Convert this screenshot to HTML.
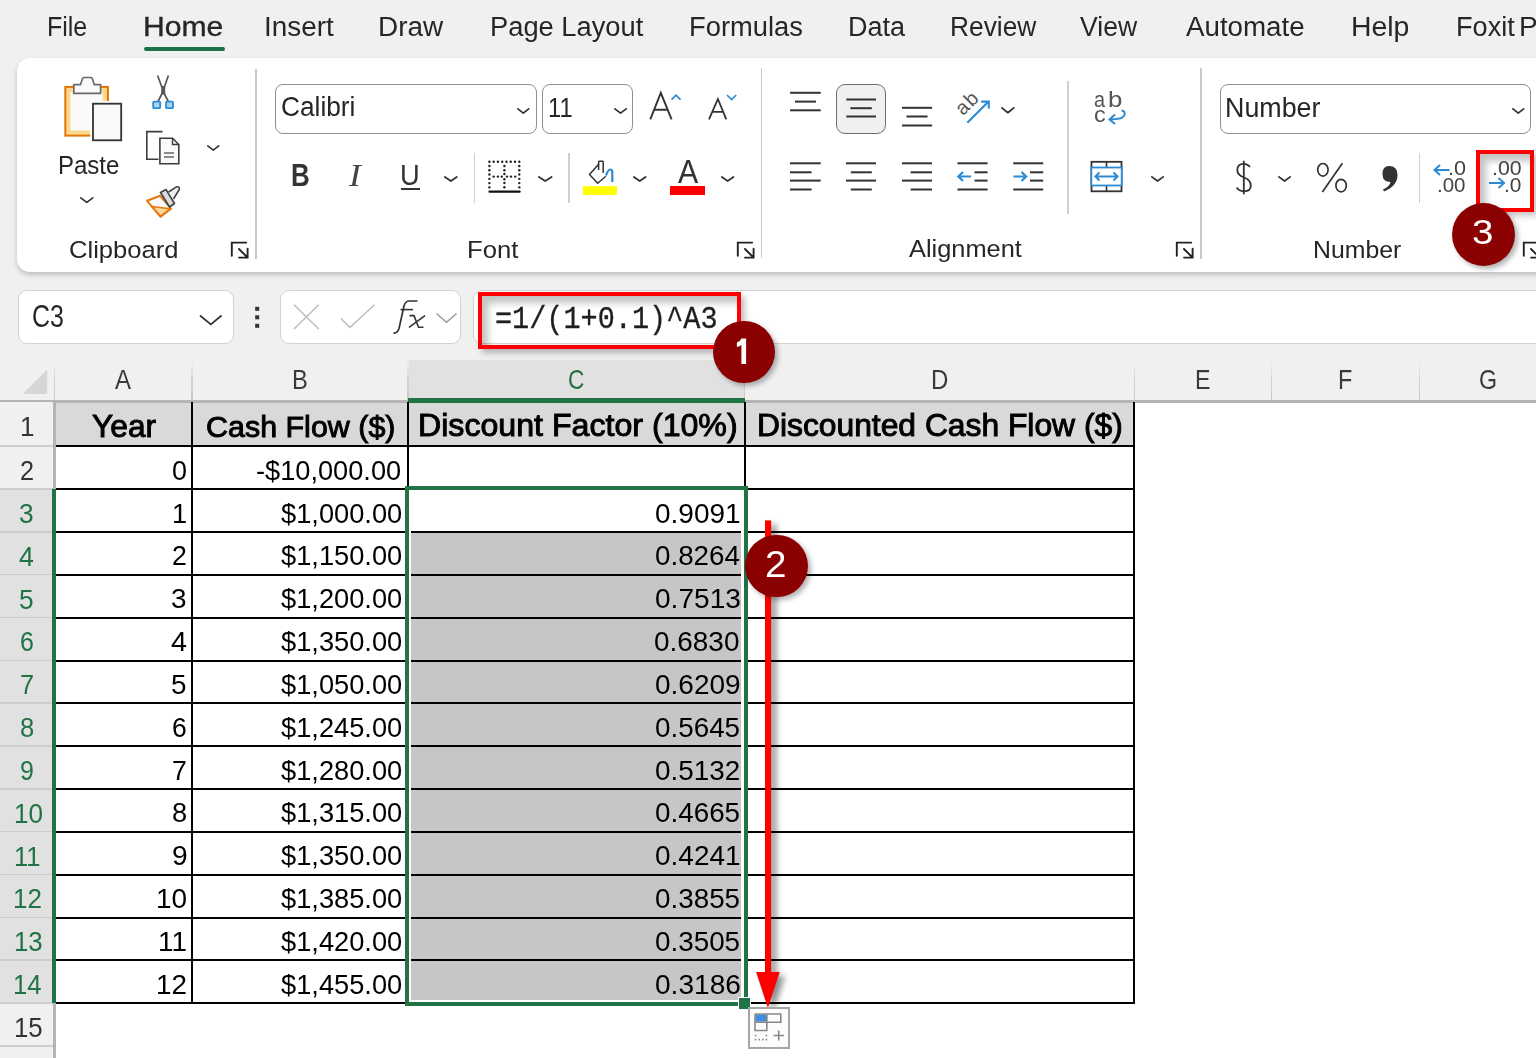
<!DOCTYPE html>
<html><head><meta charset="utf-8"><style>
html,body{margin:0;padding:0;}
body{width:1536px;height:1058px;overflow:hidden;position:relative;background:#f0f0f0;font-family:"Liberation Sans",sans-serif;}
.t{position:absolute;white-space:pre;line-height:1;transform-origin:0 0;}
.a{position:absolute;}
svg.a{overflow:visible;}
</style></head><body>
<div class="a" style="left:0.00px;top:344.00px;width:1536.00px;height:57.50px;background:#f0f0f0"></div>
<div class="a" style="left:408.00px;top:360.00px;width:336.50px;height:41.50px;background:#e1e1e1"></div>
<div class="a" style="left:191.25px;top:362.00px;width:1.50px;height:39.50px;background:linear-gradient(#f0f0f0,#d4d4d4 40%,#c8c8c8)"></div>
<div class="a" style="left:407.25px;top:362.00px;width:1.50px;height:39.50px;background:linear-gradient(#f0f0f0,#d4d4d4 40%,#c8c8c8)"></div>
<div class="a" style="left:743.75px;top:362.00px;width:1.50px;height:39.50px;background:linear-gradient(#f0f0f0,#d4d4d4 40%,#c8c8c8)"></div>
<div class="a" style="left:1133.55px;top:362.00px;width:1.50px;height:39.50px;background:linear-gradient(#f0f0f0,#d4d4d4 40%,#c8c8c8)"></div>
<div class="a" style="left:1270.75px;top:362.00px;width:1.50px;height:39.50px;background:linear-gradient(#f0f0f0,#d4d4d4 40%,#c8c8c8)"></div>
<div class="a" style="left:1418.55px;top:362.00px;width:1.50px;height:39.50px;background:linear-gradient(#f0f0f0,#d4d4d4 40%,#c8c8c8)"></div>
<div class="a" style="left:53.75px;top:362.00px;width:1.50px;height:39.50px;background:linear-gradient(#f0f0f0,#d4d4d4 40%,#c8c8c8)"></div>
<div class="a" style="left:0.00px;top:400.00px;width:1536.00px;height:2.50px;background:#b4b4b4"></div>
<div class="a" style="left:408.00px;top:398.00px;width:336.50px;height:4.50px;background:#217346"></div>
<svg class="a" style="left:20px;top:366px" width="30" height="30" viewBox="20 366 30 30"><path d="M47.2 369.5 V394 H22.8 Z" fill="#d6d6d6"/></svg>
<div class="t" style="left:115.48px;top:365.96px;font-family:'Liberation Sans',sans-serif;font-weight:normal;font-style:normal;font-size:27.54px;color:#3a3a3a;transform:scaleX(0.8719);">A</div>
<div class="t" style="left:291.77px;top:365.96px;font-family:'Liberation Sans',sans-serif;font-weight:normal;font-style:normal;font-size:27.54px;color:#3a3a3a;transform:scaleX(0.8622);">B</div>
<div class="t" style="left:568.08px;top:366.29px;font-family:'Liberation Sans',sans-serif;font-weight:normal;font-style:normal;font-size:27.14px;color:#217346;transform:scaleX(0.8358);">C</div>
<div class="t" style="left:930.51px;top:365.96px;font-family:'Liberation Sans',sans-serif;font-weight:normal;font-style:normal;font-size:27.54px;color:#3a3a3a;transform:scaleX(0.8734);">D</div>
<div class="t" style="left:1194.82px;top:365.96px;font-family:'Liberation Sans',sans-serif;font-weight:normal;font-style:normal;font-size:27.54px;color:#3a3a3a;transform:scaleX(0.8452);">E</div>
<div class="t" style="left:1337.54px;top:365.96px;font-family:'Liberation Sans',sans-serif;font-weight:normal;font-style:normal;font-size:27.54px;color:#3a3a3a;transform:scaleX(0.8510);">F</div>
<div class="t" style="left:1479.14px;top:366.29px;font-family:'Liberation Sans',sans-serif;font-weight:normal;font-style:normal;font-size:27.14px;color:#3a3a3a;transform:scaleX(0.8553);">G</div>
<div class="a" style="left:0.00px;top:401.50px;width:54.50px;height:656.50px;background:#f0f0f0"></div>
<div class="a" style="left:0.00px;top:489.20px;width:54.50px;height:513.96px;background:#e1e1e1"></div>
<div class="a" style="left:0.00px;top:445.00px;width:54.50px;height:1.60px;background:#cdcdcd"></div>
<div class="a" style="left:0.00px;top:488.20px;width:54.50px;height:1.60px;background:#cdcdcd"></div>
<div class="a" style="left:0.00px;top:531.03px;width:54.50px;height:1.60px;background:#cdcdcd"></div>
<div class="a" style="left:0.00px;top:573.86px;width:54.50px;height:1.60px;background:#cdcdcd"></div>
<div class="a" style="left:0.00px;top:616.69px;width:54.50px;height:1.60px;background:#cdcdcd"></div>
<div class="a" style="left:0.00px;top:659.52px;width:54.50px;height:1.60px;background:#cdcdcd"></div>
<div class="a" style="left:0.00px;top:702.35px;width:54.50px;height:1.60px;background:#cdcdcd"></div>
<div class="a" style="left:0.00px;top:745.18px;width:54.50px;height:1.60px;background:#cdcdcd"></div>
<div class="a" style="left:0.00px;top:788.01px;width:54.50px;height:1.60px;background:#cdcdcd"></div>
<div class="a" style="left:0.00px;top:830.84px;width:54.50px;height:1.60px;background:#cdcdcd"></div>
<div class="a" style="left:0.00px;top:873.67px;width:54.50px;height:1.60px;background:#cdcdcd"></div>
<div class="a" style="left:0.00px;top:916.50px;width:54.50px;height:1.60px;background:#cdcdcd"></div>
<div class="a" style="left:0.00px;top:959.33px;width:54.50px;height:1.60px;background:#cdcdcd"></div>
<div class="a" style="left:0.00px;top:1002.16px;width:54.50px;height:1.60px;background:#cdcdcd"></div>
<div class="a" style="left:0.00px;top:1044.99px;width:54.50px;height:1.60px;background:#cdcdcd"></div>
<div class="a" style="left:53.40px;top:401.50px;width:2.20px;height:656.50px;background:#b4b4b4"></div>
<div class="a" style="left:51.50px;top:489.20px;width:4.50px;height:513.96px;background:#217346"></div>
<div class="t" style="left:19.51px;top:413.11px;font-family:'Liberation Sans',sans-serif;font-weight:normal;font-style:normal;font-size:28.00px;color:#333;transform:scaleX(0.9311);">1</div>
<div class="t" style="left:20.08px;top:456.96px;font-family:'Liberation Sans',sans-serif;font-weight:normal;font-style:normal;font-size:28.00px;color:#333;transform:scaleX(0.9020);">2</div>
<div class="t" style="left:19.45px;top:499.97px;font-family:'Liberation Sans',sans-serif;font-weight:normal;font-style:normal;font-size:28.00px;color:#217346;transform:scaleX(0.9384);">3</div>
<div class="t" style="left:19.44px;top:542.80px;font-family:'Liberation Sans',sans-serif;font-weight:normal;font-style:normal;font-size:28.00px;color:#217346;transform:scaleX(0.9560);">4</div>
<div class="t" style="left:19.45px;top:585.63px;font-family:'Liberation Sans',sans-serif;font-weight:normal;font-style:normal;font-size:28.00px;color:#217346;transform:scaleX(0.9384);">5</div>
<div class="t" style="left:19.63px;top:628.46px;font-family:'Liberation Sans',sans-serif;font-weight:normal;font-style:normal;font-size:28.00px;color:#217346;transform:scaleX(0.8918);">6</div>
<div class="t" style="left:20.08px;top:671.29px;font-family:'Liberation Sans',sans-serif;font-weight:normal;font-style:normal;font-size:28.00px;color:#217346;transform:scaleX(0.9020);">7</div>
<div class="t" style="left:19.54px;top:714.12px;font-family:'Liberation Sans',sans-serif;font-weight:normal;font-style:normal;font-size:28.00px;color:#217346;transform:scaleX(0.9149);">8</div>
<div class="t" style="left:19.76px;top:756.95px;font-family:'Liberation Sans',sans-serif;font-weight:normal;font-style:normal;font-size:28.00px;color:#217346;transform:scaleX(0.8918);">9</div>
<div class="t" style="left:13.54px;top:799.78px;font-family:'Liberation Sans',sans-serif;font-weight:normal;font-style:normal;font-size:28.00px;color:#217346;transform:scaleX(0.9334);">10</div>
<div class="t" style="left:14.10px;top:842.61px;font-family:'Liberation Sans',sans-serif;font-weight:normal;font-style:normal;font-size:28.00px;color:#217346;transform:scaleX(0.9140);">11</div>
<div class="t" style="left:13.40px;top:885.44px;font-family:'Liberation Sans',sans-serif;font-weight:normal;font-style:normal;font-size:28.00px;color:#217346;transform:scaleX(0.9290);">12</div>
<div class="t" style="left:13.76px;top:928.27px;font-family:'Liberation Sans',sans-serif;font-weight:normal;font-style:normal;font-size:28.00px;color:#217346;transform:scaleX(0.9223);">13</div>
<div class="t" style="left:13.32px;top:971.10px;font-family:'Liberation Sans',sans-serif;font-weight:normal;font-style:normal;font-size:28.00px;color:#217346;transform:scaleX(0.9167);">14</div>
<div class="t" style="left:13.76px;top:1013.93px;font-family:'Liberation Sans',sans-serif;font-weight:normal;font-style:normal;font-size:28.00px;color:#333;transform:scaleX(0.9223);">15</div>
<div class="a" style="left:55.60px;top:402.50px;width:1480.40px;height:655.50px;background:#fff"></div>
<div class="a" style="left:55.60px;top:402.50px;width:1078.70px;height:43.50px;background:#d9d9d9"></div>
<div class="a" style="left:411.30px;top:532.10px;width:329.70px;height:467.90px;background:#c6c6c6"></div>
<div class="a" style="left:191.00px;top:402.00px;width:2.00px;height:602.16px;background:#000"></div>
<div class="a" style="left:407.00px;top:402.00px;width:2.00px;height:602.16px;background:#000"></div>
<div class="a" style="left:743.50px;top:402.00px;width:2.00px;height:602.16px;background:#000"></div>
<div class="a" style="left:1133.30px;top:402.00px;width:2.00px;height:602.16px;background:#000"></div>
<div class="a" style="left:55.60px;top:445.00px;width:1079.70px;height:2.00px;background:#000"></div>
<div class="a" style="left:55.60px;top:488.20px;width:1079.70px;height:2.00px;background:#000"></div>
<div class="a" style="left:55.60px;top:531.03px;width:1079.70px;height:2.00px;background:#000"></div>
<div class="a" style="left:55.60px;top:573.86px;width:1079.70px;height:2.00px;background:#000"></div>
<div class="a" style="left:55.60px;top:616.69px;width:1079.70px;height:2.00px;background:#000"></div>
<div class="a" style="left:55.60px;top:659.52px;width:1079.70px;height:2.00px;background:#000"></div>
<div class="a" style="left:55.60px;top:702.35px;width:1079.70px;height:2.00px;background:#000"></div>
<div class="a" style="left:55.60px;top:745.18px;width:1079.70px;height:2.00px;background:#000"></div>
<div class="a" style="left:55.60px;top:788.01px;width:1079.70px;height:2.00px;background:#000"></div>
<div class="a" style="left:55.60px;top:830.84px;width:1079.70px;height:2.00px;background:#000"></div>
<div class="a" style="left:55.60px;top:873.67px;width:1079.70px;height:2.00px;background:#000"></div>
<div class="a" style="left:55.60px;top:916.50px;width:1079.70px;height:2.00px;background:#000"></div>
<div class="a" style="left:55.60px;top:959.33px;width:1079.70px;height:2.00px;background:#000"></div>
<div class="a" style="left:55.60px;top:1002.16px;width:1079.70px;height:2.00px;background:#000"></div>
<div class="a" style="left:51.50px;top:489.20px;width:4.50px;height:513.96px;background:#217346"></div>
<div class="a" style="left:405.00px;top:486.20px;width:343.00px;height:4.20px;background:#217346"></div>
<div class="a" style="left:405.00px;top:486.20px;width:4.00px;height:520.10px;background:#217346"></div>
<div class="a" style="left:743.60px;top:486.20px;width:4.20px;height:520.10px;background:#217346"></div>
<div class="a" style="left:405.00px;top:1002.10px;width:342.80px;height:4.20px;background:#217346"></div>
<div class="a" style="left:409.00px;top:490.40px;width:2.30px;height:511.70px;background:#fff"></div>
<div class="a" style="left:741.00px;top:490.40px;width:2.60px;height:511.70px;background:#fff"></div>
<div class="a" style="left:409.00px;top:999.50px;width:334.60px;height:2.60px;background:#fff"></div>
<div class="a" style="left:411.30px;top:531.03px;width:329.70px;height:2.00px;background:#000"></div>
<div class="a" style="left:411.30px;top:573.86px;width:329.70px;height:2.00px;background:#000"></div>
<div class="a" style="left:411.30px;top:616.69px;width:329.70px;height:2.00px;background:#000"></div>
<div class="a" style="left:411.30px;top:659.52px;width:329.70px;height:2.00px;background:#000"></div>
<div class="a" style="left:411.30px;top:702.35px;width:329.70px;height:2.00px;background:#000"></div>
<div class="a" style="left:411.30px;top:745.18px;width:329.70px;height:2.00px;background:#000"></div>
<div class="a" style="left:411.30px;top:788.01px;width:329.70px;height:2.00px;background:#000"></div>
<div class="a" style="left:411.30px;top:830.84px;width:329.70px;height:2.00px;background:#000"></div>
<div class="a" style="left:411.30px;top:873.67px;width:329.70px;height:2.00px;background:#000"></div>
<div class="a" style="left:411.30px;top:916.50px;width:329.70px;height:2.00px;background:#000"></div>
<div class="a" style="left:411.30px;top:959.33px;width:329.70px;height:2.00px;background:#000"></div>
<div class="a" style="left:739.00px;top:998.00px;width:10.60px;height:10.60px;background:#217346;border:1px solid #fff;box-sizing:content-box;margin:-1px 0 0 -1px"></div>
<div class="t" style="left:91.99px;top:411.16px;font-family:'Liberation Sans',sans-serif;font-weight:normal;font-style:normal;font-size:31.16px;color:#000;transform:scaleX(1.0179);-webkit-text-stroke:0.95px #000;">Year</div>
<div class="t" style="left:206.01px;top:411.61px;font-family:'Liberation Sans',sans-serif;font-weight:normal;font-style:normal;font-size:30.29px;color:#000;transform:scaleX(1.0053);-webkit-text-stroke:0.95px #000;">Cash Flow ($)</div>
<div class="t" style="left:417.68px;top:411.23px;font-family:'Liberation Sans',sans-serif;font-weight:normal;font-style:normal;font-size:30.72px;color:#000;transform:scaleX(1.0460);-webkit-text-stroke:0.95px #000;">Discount Factor (10%)</div>
<div class="t" style="left:757.35px;top:411.23px;font-family:'Liberation Sans',sans-serif;font-weight:normal;font-style:normal;font-size:30.72px;color:#000;transform:scaleX(1.0349);-webkit-text-stroke:0.95px #000;">Discounted Cash Flow ($)</div>
<div class="t" style="left:171.64px;top:456.83px;font-family:'Liberation Sans',sans-serif;font-weight:normal;font-style:normal;font-size:27.57px;color:#000;transform:scaleX(0.9774);">0</div>
<div class="t" style="left:255.90px;top:456.83px;font-family:'Liberation Sans',sans-serif;font-weight:normal;font-style:normal;font-size:27.57px;color:#000;transform:scaleX(0.9868);">-$10,000.00</div>
<div class="t" style="left:171.75px;top:499.66px;font-family:'Liberation Sans',sans-serif;font-weight:normal;font-style:normal;font-size:27.57px;color:#000;transform:scaleX(0.9876);">1</div>
<div class="t" style="left:280.55px;top:499.66px;font-family:'Liberation Sans',sans-serif;font-weight:normal;font-style:normal;font-size:27.57px;color:#000;transform:scaleX(0.9887);">$1,000.00</div>
<div class="t" style="left:654.54px;top:499.66px;font-family:'Liberation Sans',sans-serif;font-weight:normal;font-style:normal;font-size:27.57px;color:#000;transform:scaleX(1.0146);">0.9091</div>
<div class="t" style="left:172.14px;top:542.49px;font-family:'Liberation Sans',sans-serif;font-weight:normal;font-style:normal;font-size:27.57px;color:#000;transform:scaleX(0.9676);">2</div>
<div class="t" style="left:280.55px;top:542.49px;font-family:'Liberation Sans',sans-serif;font-weight:normal;font-style:normal;font-size:27.57px;color:#000;transform:scaleX(0.9887);">$1,150.00</div>
<div class="t" style="left:654.71px;top:542.49px;font-family:'Liberation Sans',sans-serif;font-weight:normal;font-style:normal;font-size:27.57px;color:#000;transform:scaleX(1.0074);">0.8264</div>
<div class="t" style="left:171.32px;top:585.32px;font-family:'Liberation Sans',sans-serif;font-weight:normal;font-style:normal;font-size:27.57px;color:#000;transform:scaleX(1.0113);">3</div>
<div class="t" style="left:280.55px;top:585.32px;font-family:'Liberation Sans',sans-serif;font-weight:normal;font-style:normal;font-size:27.57px;color:#000;transform:scaleX(0.9887);">$1,200.00</div>
<div class="t" style="left:654.86px;top:585.32px;font-family:'Liberation Sans',sans-serif;font-weight:normal;font-style:normal;font-size:27.57px;color:#000;transform:scaleX(1.0187);">0.7513</div>
<div class="t" style="left:170.62px;top:628.15px;font-family:'Liberation Sans',sans-serif;font-weight:normal;font-style:normal;font-size:27.57px;color:#000;transform:scaleX(1.0401);">4</div>
<div class="t" style="left:280.55px;top:628.15px;font-family:'Liberation Sans',sans-serif;font-weight:normal;font-style:normal;font-size:27.57px;color:#000;transform:scaleX(0.9887);">$1,350.00</div>
<div class="t" style="left:654.39px;top:628.15px;font-family:'Liberation Sans',sans-serif;font-weight:normal;font-style:normal;font-size:27.57px;color:#000;transform:scaleX(1.0131);">0.6830</div>
<div class="t" style="left:171.32px;top:670.98px;font-family:'Liberation Sans',sans-serif;font-weight:normal;font-style:normal;font-size:27.57px;color:#000;transform:scaleX(1.0113);">5</div>
<div class="t" style="left:280.55px;top:670.98px;font-family:'Liberation Sans',sans-serif;font-weight:normal;font-style:normal;font-size:27.57px;color:#000;transform:scaleX(0.9887);">$1,050.00</div>
<div class="t" style="left:654.54px;top:670.98px;font-family:'Liberation Sans',sans-serif;font-weight:normal;font-style:normal;font-size:27.57px;color:#000;transform:scaleX(1.0146);">0.6209</div>
<div class="t" style="left:171.99px;top:713.81px;font-family:'Liberation Sans',sans-serif;font-weight:normal;font-style:normal;font-size:27.57px;color:#000;transform:scaleX(0.9610);">6</div>
<div class="t" style="left:280.55px;top:713.81px;font-family:'Liberation Sans',sans-serif;font-weight:normal;font-style:normal;font-size:27.57px;color:#000;transform:scaleX(0.9887);">$1,245.00</div>
<div class="t" style="left:654.86px;top:713.81px;font-family:'Liberation Sans',sans-serif;font-weight:normal;font-style:normal;font-size:27.57px;color:#000;transform:scaleX(1.0090);">0.5645</div>
<div class="t" style="left:172.14px;top:756.64px;font-family:'Liberation Sans',sans-serif;font-weight:normal;font-style:normal;font-size:27.57px;color:#000;transform:scaleX(0.9676);">7</div>
<div class="t" style="left:280.55px;top:756.64px;font-family:'Liberation Sans',sans-serif;font-weight:normal;font-style:normal;font-size:27.57px;color:#000;transform:scaleX(0.9887);">$1,280.00</div>
<div class="t" style="left:655.02px;top:756.64px;font-family:'Liberation Sans',sans-serif;font-weight:normal;font-style:normal;font-size:27.57px;color:#000;transform:scaleX(1.0105);">0.5132</div>
<div class="t" style="left:171.66px;top:799.47px;font-family:'Liberation Sans',sans-serif;font-weight:normal;font-style:normal;font-size:27.57px;color:#000;transform:scaleX(0.9859);">8</div>
<div class="t" style="left:280.55px;top:799.47px;font-family:'Liberation Sans',sans-serif;font-weight:normal;font-style:normal;font-size:27.57px;color:#000;transform:scaleX(0.9887);">$1,315.00</div>
<div class="t" style="left:654.86px;top:799.47px;font-family:'Liberation Sans',sans-serif;font-weight:normal;font-style:normal;font-size:27.57px;color:#000;transform:scaleX(1.0090);">0.4665</div>
<div class="t" style="left:172.13px;top:842.30px;font-family:'Liberation Sans',sans-serif;font-weight:normal;font-style:normal;font-size:27.57px;color:#000;transform:scaleX(1.0193);">9</div>
<div class="t" style="left:280.55px;top:842.30px;font-family:'Liberation Sans',sans-serif;font-weight:normal;font-style:normal;font-size:27.57px;color:#000;transform:scaleX(0.9887);">$1,350.00</div>
<div class="t" style="left:654.54px;top:842.30px;font-family:'Liberation Sans',sans-serif;font-weight:normal;font-style:normal;font-size:27.57px;color:#000;transform:scaleX(1.0146);">0.4241</div>
<div class="t" style="left:155.56px;top:885.13px;font-family:'Liberation Sans',sans-serif;font-weight:normal;font-style:normal;font-size:27.57px;color:#000;transform:scaleX(1.0155);">10</div>
<div class="t" style="left:280.55px;top:885.13px;font-family:'Liberation Sans',sans-serif;font-weight:normal;font-style:normal;font-size:27.57px;color:#000;transform:scaleX(0.9887);">$1,385.00</div>
<div class="t" style="left:654.86px;top:885.13px;font-family:'Liberation Sans',sans-serif;font-weight:normal;font-style:normal;font-size:27.57px;color:#000;transform:scaleX(1.0090);">0.3855</div>
<div class="t" style="left:158.05px;top:927.96px;font-family:'Liberation Sans',sans-serif;font-weight:normal;font-style:normal;font-size:27.57px;color:#000;transform:scaleX(1.0116);">11</div>
<div class="t" style="left:280.55px;top:927.96px;font-family:'Liberation Sans',sans-serif;font-weight:normal;font-style:normal;font-size:27.57px;color:#000;transform:scaleX(0.9887);">$1,420.00</div>
<div class="t" style="left:654.86px;top:927.96px;font-family:'Liberation Sans',sans-serif;font-weight:normal;font-style:normal;font-size:27.57px;color:#000;transform:scaleX(1.0090);">0.3505</div>
<div class="t" style="left:156.19px;top:970.79px;font-family:'Liberation Sans',sans-serif;font-weight:normal;font-style:normal;font-size:27.57px;color:#000;transform:scaleX(1.0084);">12</div>
<div class="t" style="left:280.55px;top:970.79px;font-family:'Liberation Sans',sans-serif;font-weight:normal;font-style:normal;font-size:27.57px;color:#000;transform:scaleX(0.9887);">$1,455.00</div>
<div class="t" style="left:654.86px;top:970.79px;font-family:'Liberation Sans',sans-serif;font-weight:normal;font-style:normal;font-size:27.57px;color:#000;transform:scaleX(1.0187);">0.3186</div>
<div class="a" style="left:18.20px;top:289.50px;width:216.20px;height:54.50px;border:1.5px solid #d2d2d2;border-radius:9px;box-sizing:border-box;background:#fff"></div>
<div class="t" style="left:31.97px;top:300.93px;font-family:'Liberation Sans',sans-serif;font-weight:normal;font-style:normal;font-size:31.43px;color:#262626;transform:scaleX(0.7937);">C3</div>
<svg class="a" style="left:196px;top:310px" width="30" height="20" viewBox="196 310 30 20"><path d="M200 315.5 L210.8 324.5 L221.6 315.5" fill="none" stroke="#333" stroke-width="1.7"/></svg>
<svg class="a" style="left:250px;top:300px" width="14" height="32" viewBox="250 300 14 32"><rect x="255.2" y="306.8" width="4" height="4" fill="#333"/><rect x="255.2" y="315.3" width="4" height="4" fill="#333"/><rect x="255.2" y="323.8" width="4" height="4" fill="#333"/></svg>
<div class="a" style="left:279.60px;top:289.60px;width:181.50px;height:54.60px;border:1.5px solid #d2d2d2;border-radius:9px;box-sizing:border-box;background:#fff"></div>
<svg class="a" style="left:290px;top:300px" width="90" height="35" viewBox="290 300 90 35"><path d="M294 304.8 L318.7 329 M318.7 304.8 L294 329" stroke="#bdbdbd" stroke-width="1.5"/><path d="M341 318.5 L350 327.5 L374.5 304.8" fill="none" stroke="#bdbdbd" stroke-width="1.5"/></svg>
<svg class="a" style="left:388px;top:296px" width="42" height="42" viewBox="388 296 42 42"><path d="M393.5 333 Q397.5 333.5 399 328.5 L404 306 Q405.3 301 409.5 301 H417.5" fill="none" stroke="#333" stroke-width="1.7"/><path d="M400.5 309.6 H413" stroke="#333" stroke-width="1.6"/><path d="M409.5 315.6 H414 L418.5 327.3 H423.5 M425 315.6 L409 327.3" fill="none" stroke="#333" stroke-width="1.6"/></svg>
<svg class="a" style="left:432px;top:308px" width="30" height="20" viewBox="432 308 30 20"><path d="M436.5 313.5 L446.5 322.3 L456.5 313.5" fill="none" stroke="#999" stroke-width="1.5"/></svg>
<div class="a" style="left:472.50px;top:290.00px;width:1087.50px;height:54.00px;border:1.5px solid #d2d2d2;border-radius:9px 0 0 9px;box-sizing:border-box;background:#fff"></div>
<div class="a" style="left:477.70px;top:291.50px;width:263.40px;height:57.10px;border:4.4px solid #ff0000;box-sizing:border-box;box-shadow:inset 6px 7px 7px rgba(0,0,0,0.24), 4px 4px 6px rgba(0,0,0,0.25)"></div>
<div class="t" style="left:495.32px;top:304.70px;font-family:'Liberation Mono',monospace;font-weight:normal;font-style:normal;font-size:31.82px;color:#1f1f1f;transform:scaleX(0.8966);-webkit-text-stroke:0.35px #1f1f1f;">=1/(1+0.1)^A3</div>
<div class="t" style="left:46.54px;top:12.68px;font-family:'Liberation Sans',sans-serif;font-weight:normal;font-style:normal;font-size:27.39px;color:#262626;transform:scaleX(0.9124);">File</div>
<div class="t" style="left:143.01px;top:12.68px;font-family:'Liberation Sans',sans-serif;font-weight:normal;font-style:normal;font-size:27.39px;color:#262626;transform:scaleX(1.1001);-webkit-text-stroke:0.35px #262626;">Home</div>
<div class="t" style="left:264.15px;top:12.68px;font-family:'Liberation Sans',sans-serif;font-weight:normal;font-style:normal;font-size:27.39px;color:#262626;transform:scaleX(1.0171);">Insert</div>
<div class="t" style="left:378.44px;top:12.68px;font-family:'Liberation Sans',sans-serif;font-weight:normal;font-style:normal;font-size:27.39px;color:#262626;transform:scaleX(1.0200);">Draw</div>
<div class="t" style="left:489.60px;top:12.68px;font-family:'Liberation Sans',sans-serif;font-weight:normal;font-style:normal;font-size:27.39px;color:#262626;transform:scaleX(0.9969);">Page Layout</div>
<div class="t" style="left:689.15px;top:12.68px;font-family:'Liberation Sans',sans-serif;font-weight:normal;font-style:normal;font-size:27.39px;color:#262626;transform:scaleX(0.9983);">Formulas</div>
<div class="t" style="left:847.82px;top:12.68px;font-family:'Liberation Sans',sans-serif;font-weight:normal;font-style:normal;font-size:27.39px;color:#262626;transform:scaleX(0.9871);">Data</div>
<div class="t" style="left:950.34px;top:12.68px;font-family:'Liberation Sans',sans-serif;font-weight:normal;font-style:normal;font-size:27.39px;color:#262626;transform:scaleX(0.9622);">Review</div>
<div class="t" style="left:1079.87px;top:12.68px;font-family:'Liberation Sans',sans-serif;font-weight:normal;font-style:normal;font-size:27.39px;color:#262626;transform:scaleX(0.9701);">View</div>
<div class="t" style="left:1185.56px;top:12.68px;font-family:'Liberation Sans',sans-serif;font-weight:normal;font-style:normal;font-size:27.39px;color:#262626;transform:scaleX(1.0124);">Automate</div>
<div class="t" style="left:1350.73px;top:12.68px;font-family:'Liberation Sans',sans-serif;font-weight:normal;font-style:normal;font-size:27.39px;color:#262626;transform:scaleX(1.0377);">Help</div>
<div class="t" style="left:1455.82px;top:12.68px;font-family:'Liberation Sans',sans-serif;font-weight:normal;font-style:normal;font-size:27.39px;color:#262626;transform:scaleX(0.9907);">Foxit</div>
<div class="t" style="left:1519.26px;top:12.68px;font-family:'Liberation Sans',sans-serif;font-weight:normal;font-style:normal;font-size:27.39px;color:#262626;transform:scaleX(1.0222);">PDF</div>
<div class="a" style="left:144.00px;top:47.00px;width:81.00px;height:4.00px;background:#1e7145;border-radius:2px"></div>
<div class="a" style="left:16.50px;top:57.50px;width:1543.50px;height:214.50px;background:#fff;border-radius:13px;box-shadow:0 3px 5px rgba(0,0,0,0.2)"></div>
<div class="a" style="left:255.25px;top:68.50px;width:1.50px;height:190.20px;background:#c9c9c9"></div>
<div class="a" style="left:760.95px;top:68.30px;width:1.50px;height:190.20px;background:#c9c9c9"></div>
<div class="a" style="left:1200.05px;top:68.30px;width:1.50px;height:190.30px;background:#c9c9c9"></div>
<div class="a" style="left:473.80px;top:152.50px;width:1.40px;height:50.80px;background:#d0d0d0"></div>
<div class="a" style="left:568.30px;top:152.50px;width:1.40px;height:50.50px;background:#d0d0d0"></div>
<div class="a" style="left:1067.40px;top:80.80px;width:1.40px;height:133.20px;background:#d0d0d0"></div>
<div class="a" style="left:1418.60px;top:152.50px;width:1.40px;height:50.50px;background:#d0d0d0"></div>
<div class="t" style="left:69.28px;top:238.79px;font-family:'Liberation Sans',sans-serif;font-weight:normal;font-style:normal;font-size:23.29px;color:#262626;transform:scaleX(1.0975);">Clipboard</div>
<div class="t" style="left:466.93px;top:238.53px;font-family:'Liberation Sans',sans-serif;font-weight:normal;font-style:normal;font-size:23.48px;color:#262626;transform:scaleX(1.0923);">Font</div>
<div class="t" style="left:909.22px;top:238.43px;font-family:'Liberation Sans',sans-serif;font-weight:normal;font-style:normal;font-size:23.48px;color:#262626;transform:scaleX(1.0809);">Alignment</div>
<div class="t" style="left:1313.01px;top:238.53px;font-family:'Liberation Sans',sans-serif;font-weight:normal;font-style:normal;font-size:23.48px;color:#262626;transform:scaleX(1.0572);">Number</div>
<svg class="a" style="left:228.7px;top:240.4px" width="24" height="22" viewBox="228.7 240.4 24 22"><path d="M245.89999999999998 243.0 H231.5 V256.2" fill="none" stroke="#222" stroke-width="1.9" stroke-linecap="round"/><path d="M238.7 249.4 L246.7 257.4 M247.29999999999998 249.20000000000002 V258.0 H238.7" fill="none" stroke="#222" stroke-width="1.9" stroke-linecap="round"/></svg>
<svg class="a" style="left:734.8px;top:240.4px" width="24" height="22" viewBox="734.8 240.4 24 22"><path d="M752.0 243.0 H737.5999999999999 V256.2" fill="none" stroke="#222" stroke-width="1.9" stroke-linecap="round"/><path d="M744.8 249.4 L752.8 257.4 M753.4 249.20000000000002 V258.0 H744.8" fill="none" stroke="#222" stroke-width="1.9" stroke-linecap="round"/></svg>
<svg class="a" style="left:1174.2px;top:240.4px" width="24" height="22" viewBox="1174.2 240.4 24 22"><path d="M1191.4 243.0 H1177.0 V256.2" fill="none" stroke="#222" stroke-width="1.9" stroke-linecap="round"/><path d="M1184.2 249.4 L1192.2 257.4 M1192.8 249.20000000000002 V258.0 H1184.2" fill="none" stroke="#222" stroke-width="1.9" stroke-linecap="round"/></svg>
<svg class="a" style="left:1521.3px;top:240.4px" width="24" height="22" viewBox="1521.3 240.4 24 22"><path d="M1538.5 243.0 H1524.1 V256.2" fill="none" stroke="#222" stroke-width="1.9" stroke-linecap="round"/><path d="M1531.3 249.4 L1539.3 257.4 M1539.8999999999999 249.20000000000002 V258.0 H1531.3" fill="none" stroke="#222" stroke-width="1.9" stroke-linecap="round"/></svg>
<svg class="a" style="left:60px;top:74px" width="70" height="70" viewBox="60 74 70 70"><rect x="65.3" y="86.9" width="42.6" height="48.7" fill="#fdd98f" stroke="#e47405" stroke-width="2"/><rect x="70.6" y="92" width="32" height="38.5" fill="#fafafa"/><path d="M73.8 93.3 V84.6 H80.5 L82.6 78.3 Q83 77.5 84 77.5 H90.8 Q91.8 77.5 92.2 78.3 L94.3 84.6 H100.6 V93.3 Z" fill="#fafafa" stroke="#6a6a6a" stroke-width="1.7"/><rect x="90.3" y="101" width="33" height="41.5" fill="#fff"/><rect x="93" y="103.7" width="28.2" height="36.6" fill="#f9f9f9" stroke="#333" stroke-width="1.8"/></svg>
<div class="t" style="left:58.09px;top:152.40px;font-family:'Liberation Sans',sans-serif;font-weight:normal;font-style:normal;font-size:26.67px;color:#262626;transform:scaleX(0.9003);">Paste</div>
<svg class="a" style="left:78px;top:195.1px" width="17.599999999999994" height="10.200000000000017" viewBox="78 195.1 17.599999999999994 10.200000000000017"><path d="M80.8 197.9 L86.8 202.5 L92.8 197.9" fill="none" stroke="#333" stroke-width="1.6" stroke-linecap="round" stroke-linejoin="round"/></svg>
<svg class="a" style="left:148px;top:72px" width="30" height="40" viewBox="148 72 30 40"><path d="M157.6 75.5 L162 87.5 M168.4 75.5 L164.2 87.5 M162 93.5 L158 101.5 M164.2 93.5 L168.3 101.5" stroke="#555" stroke-width="1.7" fill="none"/><rect x="161.2" y="86" width="4" height="8.5" fill="#555"/><rect x="153.2" y="101.6" width="7" height="6.6" rx="1" fill="#a9d6ee" stroke="#2a8ad4" stroke-width="1.8"/><rect x="166" y="101.6" width="7" height="6.6" rx="1" fill="#a9d6ee" stroke="#2a8ad4" stroke-width="1.8"/></svg>
<svg class="a" style="left:143px;top:128px" width="40" height="40" viewBox="143 128 40 40"><path d="M162.5 131.6 H146.8 V159.2 H158.5" fill="none" stroke="#3c3c3c" stroke-width="1.6"/><path d="M159.9 138.2 H172.5 L178.8 144.5 V163.7 H159.9 Z" fill="#fafafa" stroke="#3c3c3c" stroke-width="1.6"/><path d="M172.5 138.2 V144.5 H178.8" fill="none" stroke="#3c3c3c" stroke-width="1.4"/><path d="M164 153 H174 M164 157 H174" stroke="#666" stroke-width="1.3"/></svg>
<svg class="a" style="left:205.4px;top:143.4px" width="16.5" height="9.900000000000006" viewBox="205.4 143.4 16.5 9.900000000000006"><path d="M208.20000000000002 146.20000000000002 L213.65 150.5 L219.1 146.20000000000002" fill="none" stroke="#333" stroke-width="1.6" stroke-linecap="round" stroke-linejoin="round"/></svg>
<svg class="a" style="left:143px;top:183px" width="40" height="38" viewBox="143 183 40 38"><path d="M147 200.8 L160.2 195.8 L171 208.6 L160.6 216.8 Z" fill="#fafafa" stroke="#e8780c" stroke-width="2" stroke-linejoin="round"/><path d="M152 206.5 L170 208.8 L160.6 216.2 Z" fill="#fdd99b" stroke="#e8780c" stroke-width="1.6" stroke-linejoin="round"/><path d="M160.5 192.5 L166 189.5 L174.5 203.5 L169.5 207 Z" fill="#ddd" stroke="#444" stroke-width="1.6" stroke-linejoin="round"/><path d="M168.5 192 L176.5 186.8 Q179.8 186.2 179.3 189.5 L173.5 199" fill="#eee" stroke="#444" stroke-width="1.6" stroke-linejoin="round"/></svg>
<div class="a" style="left:274.60px;top:83.90px;width:262.60px;height:49.90px;border:1.6px solid #8f8f8f;border-radius:8px;box-sizing:border-box;background:#fff"></div>
<div class="t" style="left:280.80px;top:94.36px;font-family:'Liberation Sans',sans-serif;font-weight:normal;font-style:normal;font-size:26.71px;color:#262626;transform:scaleX(0.9834);">Calibri</div>
<svg class="a" style="left:515.4px;top:105.5px" width="16.600000000000023" height="10.0" viewBox="515.4 105.5 16.600000000000023 10.0"><path d="M518.3 108.4 L523.7 112.6 L529.1 108.4" fill="none" stroke="#333" stroke-width="1.8" stroke-linecap="round" stroke-linejoin="round"/></svg>
<div class="a" style="left:542.40px;top:83.90px;width:91.00px;height:49.90px;border:1.6px solid #8f8f8f;border-radius:8px;box-sizing:border-box;background:#fff"></div>
<div class="t" style="left:548.48px;top:93.88px;font-family:'Liberation Sans',sans-serif;font-weight:normal;font-style:normal;font-size:27.97px;color:#262626;transform:scaleX(0.8474);">11</div>
<svg class="a" style="left:611.5px;top:105.5px" width="17.100000000000023" height="10.0" viewBox="611.5 105.5 17.100000000000023 10.0"><path d="M614.4 108.4 L620.05 112.6 L625.7 108.4" fill="none" stroke="#333" stroke-width="1.8" stroke-linecap="round" stroke-linejoin="round"/></svg>
<svg class="a" style="left:645px;top:88px" width="95" height="36" viewBox="645 88 95 36"><path d="M650.3 119.3 L660.8 92.8 L671.6 119.3 M654.2 109.8 H667.5" fill="none" stroke="#333" stroke-width="1.9" stroke-linejoin="miter"/><path d="M671.5 99.6 L676 95.2 L680.5 99.6" fill="none" stroke="#2a8ad4" stroke-width="1.7"/><path d="M709 119.3 L717.9 99 L726.3 119.3 M712.2 111.8 H723.2" fill="none" stroke="#333" stroke-width="1.8"/><path d="M727 95 L731.6 99.5 L736.2 95" fill="none" stroke="#2a8ad4" stroke-width="1.7"/></svg>
<div class="t" style="left:290.87px;top:159.98px;font-family:'Liberation Sans',sans-serif;font-weight:bold;font-style:normal;font-size:30.43px;color:#333;transform:scaleX(0.8511);">B</div>
<div class="t" style="left:348.83px;top:158.75px;font-family:'Liberation Serif',serif;font-weight:normal;font-style:italic;font-size:32.06px;color:#444;transform:scaleX(1.1098);">I</div>
<div class="t" style="left:400.22px;top:160.10px;font-family:'Liberation Sans',sans-serif;font-weight:normal;font-style:normal;font-size:29.71px;color:#333;transform:scaleX(0.9196);">U</div>
<div class="a" style="left:400.70px;top:188.40px;width:19.30px;height:1.80px;background:#333"></div>
<svg class="a" style="left:442px;top:173.6px" width="17.69999999999999" height="9.900000000000006" viewBox="442 173.6 17.69999999999999 9.900000000000006"><path d="M444.9 176.5 L450.85 180.6 L456.8 176.5" fill="none" stroke="#333" stroke-width="1.8" stroke-linecap="round" stroke-linejoin="round"/></svg>
<svg class="a" style="left:486px;top:158px" width="38" height="38" viewBox="486 158 38 38"><g fill="#222"><circle cx="489.40" cy="161.75" r="1.2"/><circle cx="493.67" cy="161.75" r="1.2"/><circle cx="497.94" cy="161.75" r="1.2"/><circle cx="502.21" cy="161.75" r="1.2"/><circle cx="506.48" cy="161.75" r="1.2"/><circle cx="510.75" cy="161.75" r="1.2"/><circle cx="515.02" cy="161.75" r="1.2"/><circle cx="519.29" cy="161.75" r="1.2"/><circle cx="489.40" cy="166.02" r="1.2"/><circle cx="519.29" cy="166.02" r="1.2"/><circle cx="489.40" cy="170.29" r="1.2"/><circle cx="519.29" cy="170.29" r="1.2"/><circle cx="489.40" cy="174.56" r="1.2"/><circle cx="519.29" cy="174.56" r="1.2"/><circle cx="489.40" cy="178.83" r="1.2"/><circle cx="519.29" cy="178.83" r="1.2"/><circle cx="489.40" cy="183.10" r="1.2"/><circle cx="519.29" cy="183.10" r="1.2"/><circle cx="489.40" cy="187.37" r="1.2"/><circle cx="519.29" cy="187.37" r="1.2"/><circle cx="504.40" cy="165.95" r="1.2"/><circle cx="504.40" cy="170.20" r="1.2"/><circle cx="504.40" cy="183.00" r="1.2"/><circle cx="504.40" cy="187.30" r="1.2"/><circle cx="493.70" cy="176.60" r="1.2"/><circle cx="497.90" cy="176.60" r="1.2"/><circle cx="511.00" cy="176.60" r="1.2"/><circle cx="515.20" cy="176.60" r="1.2"/><circle cx="504.40" cy="174.00" r="1.2"/><circle cx="504.40" cy="179.20" r="1.2"/><circle cx="501.80" cy="176.60" r="1.2"/><circle cx="507.00" cy="176.60" r="1.2"/></g><rect x="488.4" y="190.4" width="32.3" height="2.4" rx="1" fill="#111"/></svg>
<svg class="a" style="left:536px;top:173.6px" width="18.5" height="9.900000000000006" viewBox="536 173.6 18.5 9.900000000000006"><path d="M538.9 176.5 L545.25 180.6 L551.6 176.5" fill="none" stroke="#333" stroke-width="1.8" stroke-linecap="round" stroke-linejoin="round"/></svg>
<svg class="a" style="left:580px;top:155px" width="40" height="42" viewBox="580 155 40 42"><path d="M598.8 164 L589.5 174.6 L597.7 183.3 L605.8 176.3" fill="#fff" stroke="#333" stroke-width="1.5" stroke-linejoin="round"/><path d="M598.6 170 V162 Q598.6 161.3 599.5 161.3 H602.4 Q603.2 161.3 603.2 162 V173" fill="none" stroke="#333" stroke-width="1.5"/><path d="M606 175.5 Q608 169.5 610.5 169.5 Q612.3 169.5 612.3 172 V182" fill="none" stroke="#2a8ad4" stroke-width="2.2"/><rect x="582.8" y="186.2" width="34.2" height="8.7" fill="#ffff00"/></svg>
<svg class="a" style="left:630.8px;top:173.6px" width="17.5" height="9.900000000000006" viewBox="630.8 173.6 17.5 9.900000000000006"><path d="M633.6999999999999 176.5 L639.55 180.6 L645.4 176.5" fill="none" stroke="#333" stroke-width="1.8" stroke-linecap="round" stroke-linejoin="round"/></svg>
<div class="t" style="left:678.10px;top:155.32px;font-family:'Liberation Sans',sans-serif;font-weight:normal;font-style:normal;font-size:33.19px;color:#333;transform:scaleX(0.9126);">A</div>
<div class="a" style="left:670.20px;top:186.20px;width:34.80px;height:8.50px;background:#ff0000"></div>
<svg class="a" style="left:718.7px;top:173.6px" width="17.299999999999955" height="9.900000000000006" viewBox="718.7 173.6 17.299999999999955 9.900000000000006"><path d="M721.6 176.5 L727.35 180.6 L733.1 176.5" fill="none" stroke="#333" stroke-width="1.8" stroke-linecap="round" stroke-linejoin="round"/></svg>
<div class="a" style="left:835.90px;top:83.90px;width:50.50px;height:50.30px;border:1.6px solid #6e6e6e;border-radius:9px;box-sizing:border-box;background:#f0f0f0"></div>
<svg class="a" style="left:785px;top:85px" width="265" height="110" viewBox="785 85 265 110"><rect x="790.1" y="91.8" width="30.600000000000023" height="2" fill="#333"/><rect x="795" y="100.6" width="21" height="2" fill="#333"/><rect x="790.1" y="109.3" width="30.600000000000023" height="2" fill="#333"/><rect x="846.3" y="98.5" width="29.700000000000045" height="2" fill="#333"/><rect x="850.4" y="107.2" width="21.399999999999977" height="2" fill="#333"/><rect x="846.3" y="115.5" width="29.700000000000045" height="2" fill="#333"/><rect x="902" y="106.8" width="30.100000000000023" height="2" fill="#333"/><rect x="906.5" y="115.5" width="21.0" height="2" fill="#333"/><rect x="902" y="124.5" width="30.100000000000023" height="2" fill="#333"/><rect x="790" y="162.3" width="30.700000000000045" height="2" fill="#333"/><rect x="790" y="171.3" width="21.600000000000023" height="2" fill="#333"/><rect x="790" y="179.6" width="30.700000000000045" height="2" fill="#333"/><rect x="790" y="188.5" width="21.600000000000023" height="2" fill="#333"/><rect x="846" y="162.3" width="30" height="2" fill="#333"/><rect x="850.8" y="171.3" width="21.0" height="2" fill="#333"/><rect x="846" y="179.6" width="30" height="2" fill="#333"/><rect x="850.8" y="188.5" width="21.0" height="2" fill="#333"/><rect x="902" y="162.3" width="30" height="2" fill="#333"/><rect x="910.7" y="171.3" width="21.299999999999955" height="2" fill="#333"/><rect x="902" y="179.6" width="30" height="2" fill="#333"/><rect x="910.7" y="188.5" width="21.299999999999955" height="2" fill="#333"/><rect x="957.5" y="162.3" width="30.100000000000023" height="2" fill="#333"/><rect x="974.5" y="171.3" width="13.100000000000023" height="2" fill="#333"/><rect x="974.5" y="179.6" width="13.100000000000023" height="2" fill="#333"/><rect x="957.5" y="188.5" width="30.100000000000023" height="2" fill="#333"/><rect x="1013.2" y="162.3" width="30.0" height="2" fill="#333"/><rect x="1030" y="171.3" width="13.200000000000045" height="2" fill="#333"/><rect x="1030" y="179.6" width="13.200000000000045" height="2" fill="#333"/><rect x="1013.2" y="188.5" width="30.0" height="2" fill="#333"/><path d="M971 176.5 H958.5 M963 172 L958.3 176.5 L963 181" fill="none" stroke="#2a8ad4" stroke-width="2.2"/><path d="M1013.5 176.5 H1026 M1021.5 172 L1026.2 176.5 L1021.5 181" fill="none" stroke="#2a8ad4" stroke-width="2.2"/></svg>
<svg class="a" style="left:950px;top:86px" width="45" height="42" viewBox="950 86 45 42"><g transform="rotate(-45 966.5 103)"><text x="967.3" y="110" text-anchor="middle" font-family="Liberation Sans" font-size="20" fill="#555" style="letter-spacing:1.5px">ab</text></g><path d="M967.3 122.8 L988.3 101.8" stroke="#2a8ad4" stroke-width="2.1"/><path d="M981.2 101.6 H988.8 V108.5" fill="none" stroke="#2a8ad4" stroke-width="2.1"/></svg>
<svg class="a" style="left:999px;top:105px" width="17.700000000000045" height="10.599999999999994" viewBox="999 105 17.700000000000045 10.599999999999994"><path d="M1001.9 107.9 L1007.85 112.69999999999999 L1013.8000000000001 107.9" fill="none" stroke="#333" stroke-width="1.8" stroke-linecap="round" stroke-linejoin="round"/></svg>
<div class="t" style="left:1093.98px;top:90.07px;font-family:'Liberation Sans',sans-serif;font-weight:normal;font-style:normal;font-size:21.32px;color:#555;transform:scaleX(0.9335);">a</div>
<div class="t" style="left:1107.57px;top:89.31px;font-family:'Liberation Sans',sans-serif;font-weight:normal;font-style:normal;font-size:22.21px;color:#555;transform:scaleX(1.1598);">b</div>
<div class="t" style="left:1093.88px;top:105.01px;font-family:'Liberation Sans',sans-serif;font-weight:normal;font-style:normal;font-size:21.51px;color:#555;transform:scaleX(1.0863);">c</div>
<svg class="a" style="left:1100px;top:98px" width="30" height="30" viewBox="1100 98 30 30"><path d="M1121.5 110.5 Q1125.5 111 1124.5 115 Q1123 119.5 1110 119.5" fill="none" stroke="#2a8ad4" stroke-width="2"/><path d="M1115 114.5 L1109.5 119.5 L1115 124" fill="none" stroke="#2a8ad4" stroke-width="2"/></svg>
<svg class="a" style="left:1088px;top:158px" width="40" height="38" viewBox="1088 158 40 38"><rect x="1091.5" y="161.8" width="30" height="29.5" fill="none" stroke="#333" stroke-width="1.8"/><path d="M1106.5 162 V168 M1106.5 185.5 V191" stroke="#333" stroke-width="1.6"/><rect x="1091.3" y="167.5" width="30.4" height="18" fill="#fff" stroke="#2a8ad4" stroke-width="1.8"/><path d="M1095.5 176.5 H1117.5 M1099.5 172.5 L1095.5 176.5 L1099.5 180.5 M1113.5 172.5 L1117.5 176.5 L1113.5 180.5" fill="none" stroke="#2a8ad4" stroke-width="2"/></svg>
<svg class="a" style="left:1149.3px;top:173.6px" width="17.100000000000136" height="9.900000000000006" viewBox="1149.3 173.6 17.100000000000136 9.900000000000006"><path d="M1152.2 176.5 L1157.85 180.6 L1163.5 176.5" fill="none" stroke="#333" stroke-width="1.8" stroke-linecap="round" stroke-linejoin="round"/></svg>
<div class="a" style="left:1219.50px;top:84.00px;width:311.70px;height:50.00px;border:1.6px solid #8f8f8f;border-radius:8px;box-sizing:border-box;background:#fff"></div>
<div class="t" style="left:1224.97px;top:94.03px;font-family:'Liberation Sans',sans-serif;font-weight:normal;font-style:normal;font-size:27.10px;color:#262626;transform:scaleX(0.9905);">Number</div>
<svg class="a" style="left:1509.5px;top:105.5px" width="16.5" height="10.0" viewBox="1509.5 105.5 16.5 10.0"><path d="M1512.4 108.4 L1517.75 112.6 L1523.1 108.4" fill="none" stroke="#333" stroke-width="1.8" stroke-linecap="round" stroke-linejoin="round"/></svg>
<svg class="a" style="left:1232px;top:157px" width="24" height="40" viewBox="1232 157 24 40"><path d="M1250 167 Q1247.8 163.8 1243.8 163.8 Q1237.3 163.8 1237.3 170 Q1237.3 175 1244 177.5 Q1250.8 180 1250.8 185.5 Q1250.8 191.3 1243.8 191.3 Q1239 191.3 1236.6 187.6" fill="none" stroke="#333" stroke-width="1.8"/><path d="M1243.8 160.8 V194.3" stroke="#333" stroke-width="1.8"/></svg>
<svg class="a" style="left:1275.7px;top:173.6px" width="17.09999999999991" height="9.900000000000006" viewBox="1275.7 173.6 17.09999999999991 9.900000000000006"><path d="M1278.6000000000001 176.5 L1284.25 180.6 L1289.8999999999999 176.5" fill="none" stroke="#333" stroke-width="1.8" stroke-linecap="round" stroke-linejoin="round"/></svg>
<svg class="a" style="left:1312px;top:158px" width="40" height="40" viewBox="1312 158 40 40"><ellipse cx="1322.9" cy="169.8" rx="5.2" ry="6.3" fill="none" stroke="#333" stroke-width="1.7"/><ellipse cx="1341.1" cy="185.6" rx="5.2" ry="6.3" fill="none" stroke="#333" stroke-width="1.7"/><path d="M1342.4 163.3 L1322.4 192" stroke="#333" stroke-width="1.7"/></svg>
<svg class="a" style="left:1378px;top:160px" width="24" height="34" viewBox="1378 160 24 34"><path d="M1389 166 Q1397.5 166 1397.5 175 Q1397.5 186 1384 191.5 L1383 189.5 Q1390 186 1390.5 182 Q1382.5 182 1382.5 174 Q1382.5 166 1389 166Z" fill="#333"/></svg>
<div class="t" style="left:1448.09px;top:158.51px;font-family:'Liberation Sans',sans-serif;font-weight:normal;font-style:normal;font-size:19.29px;color:#444;transform:scaleX(1.1205);">.0</div>
<div class="t" style="left:1437.29px;top:175.59px;font-family:'Liberation Sans',sans-serif;font-weight:normal;font-style:normal;font-size:19.43px;color:#444;transform:scaleX(1.0545);">.00</div>
<svg class="a" style="left:1430px;top:160px" width="22" height="20" viewBox="1430 160 22 20"><path d="M1449.5 170 H1435 M1440 165 L1434.5 170 L1440 175" fill="none" stroke="#2a8ad4" stroke-width="2"/></svg>
<div class="a" style="left:1476.30px;top:149.90px;width:57.60px;height:62.20px;border:4.6px solid #ff0000;box-sizing:border-box;box-shadow:inset 6px 7px 7px rgba(0,0,0,0.24), 4px 4px 6px rgba(0,0,0,0.22)"></div>
<div class="t" style="left:1491.99px;top:158.51px;font-family:'Liberation Sans',sans-serif;font-weight:normal;font-style:normal;font-size:19.29px;color:#444;transform:scaleX(1.1033);">.00</div>
<div class="t" style="left:1504.14px;top:175.59px;font-family:'Liberation Sans',sans-serif;font-weight:normal;font-style:normal;font-size:19.43px;color:#444;transform:scaleX(1.0731);">.0</div>
<svg class="a" style="left:1486px;top:170px" width="22" height="24" viewBox="1486 170 22 24"><path d="M1489 183 H1503.5 M1498.5 178 L1504 183 L1498.5 188" fill="none" stroke="#2a8ad4" stroke-width="2"/></svg>
<svg class="a" style="left:755px;top:515px" width="40" height="500" viewBox="755 515 40 500"><defs><filter id="sh" x="-50%" y="-10%" width="200%" height="120%"><feGaussianBlur stdDeviation="3"/></filter></defs><g filter="url(#sh)" opacity="0.45" transform="translate(5,4)"><rect x="765" y="520.4" width="6.2" height="460" fill="#000"/><path d="M756.1 972 H779.7 L768 1008 Z" fill="#000"/></g><rect x="765" y="520.4" width="6.2" height="460" fill="#ff0000"/><path d="M756.1 972 H779.7 L767.9 1008 Z" fill="#ff0000"/></svg>
<div class="a" style="left:713.40px;top:321.30px;width:62px;height:62px;border-radius:50%;background:#8b0000;box-shadow:3px 3px 5px rgba(0,0,0,0.3)"></div>
<svg class="a" style="left:730px;top:334px" width="20" height="34" viewBox="730 334 20 34"><path d="M741.4 338.4 H746.1 V364 H741.4 V345 Q739.6 346.5 736.9 347 V342.6 Q740 341.6 741.4 338.4 Z" fill="#fff"/></svg>
<div class="a" style="left:745.25px;top:534.95px;width:62.5px;height:62.5px;border-radius:50%;background:#8b0000;box-shadow:3px 3px 5px rgba(0,0,0,0.3)"></div><div class="t" style="left:764.75px;top:546.85px;font-family:'Liberation Sans',sans-serif;font-weight:normal;font-style:normal;font-size:36.43px;color:#fff;transform:scaleX(1.0606);">2</div>
<div class="a" style="left:1452.00px;top:203.10px;width:63px;height:63px;border-radius:50%;background:#8b0000;box-shadow:3px 3px 5px rgba(0,0,0,0.3)"></div><div class="t" style="left:1471.50px;top:215.14px;font-family:'Liberation Sans',sans-serif;font-weight:normal;font-style:normal;font-size:35.86px;color:#fff;transform:scaleX(1.0731);">3</div>
<div class="a" style="left:748.20px;top:1006.80px;width:42.20px;height:42.10px;border:2px solid #a6a6a6;box-sizing:border-box;background:#fcfcfc"></div>
<svg class="a" style="left:750px;top:1010px" width="40" height="36" viewBox="750 1010 40 36"><rect x="755.6" y="1014.6" width="11.6" height="7" fill="#3c8fe0"/><path d="M755 1014 H780.8 V1022.3 H755 M755 1014 V1030.5 H766.8 V1014" fill="none" stroke="#888" stroke-width="1.6"/><path d="M773.5 1035.5 H783.9 M778.7 1030.4 V1040.6" stroke="#888" stroke-width="1.6"/><g fill="#888"><rect x="754.8" y="1034.7" width="1.6" height="1.6"/><rect x="765.6" y="1034.7" width="1.6" height="1.6"/><rect x="754.8" y="1038.8" width="1.6" height="1.6"/><rect x="758.4" y="1038.8" width="1.6" height="1.6"/><rect x="762" y="1038.8" width="1.6" height="1.6"/><rect x="765.6" y="1038.8" width="1.6" height="1.6"/></g></svg>
</body></html>
